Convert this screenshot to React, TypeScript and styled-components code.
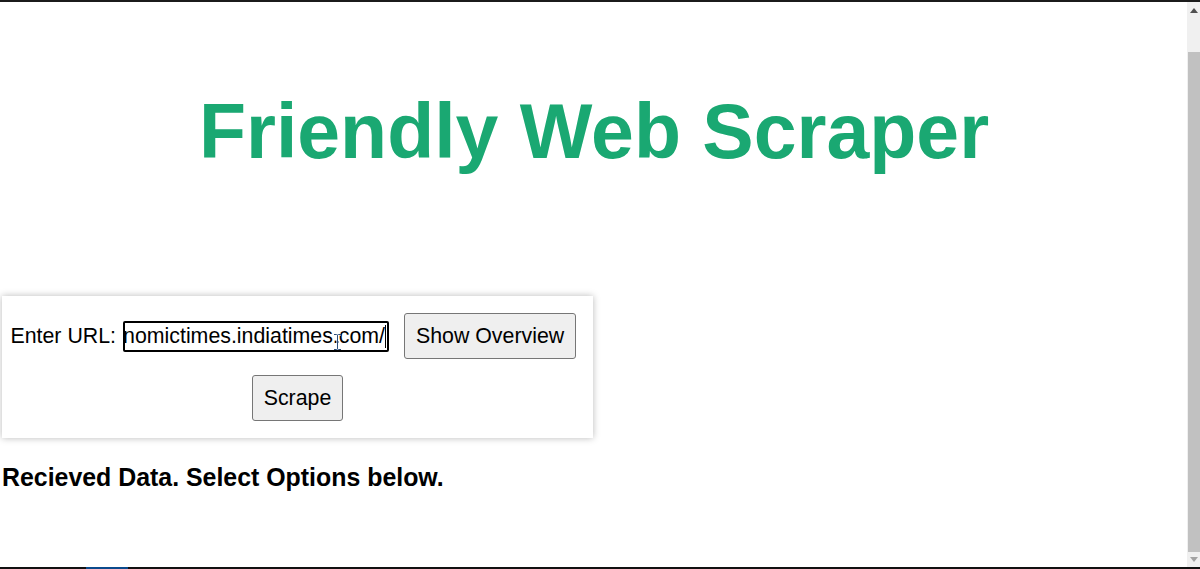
import React from "react";
import styled, { createGlobalStyle } from "styled-components";

const Global = createGlobalStyle`
  html, body { margin: 0; padding: 0; background: #fff; overflow: hidden; }
  body { font-family: "Liberation Sans", Arial, sans-serif; color: #000; }
`;

const Frame = styled.div`
  width: 1200px;
  height: 569px;
  display: flex;
  flex-direction: column;
  background: #fff;
`;

const EdgeLine = styled.div`
  height: 2px;
  flex: none;
  display: flex;
  background: #1b1b1b;
`;

const EdgeSegment = styled.div<{ $w?: number; $color: string }>`
  flex: ${(p) => (p.$w ? `0 0 ${p.$w}px` : "1")};
  background: ${(p) => p.$color};
`;

const Viewport = styled.div`
  flex: 1;
  display: flex;
  min-height: 0;
`;

const Main = styled.main`
  flex: 1;
  min-width: 0;
  display: flex;
  flex-direction: column;
  padding-left: 1px;
`;

const Title = styled.h1`
  margin: 85px 0 0;
  text-align: center;
  font-size: 77px;
  line-height: 88px;
  font-weight: 700;
  color: #1aa872;
`;

const Card = styled.section`
  margin: 121px 0 0 1px;
  width: 591px;
  box-sizing: border-box;
  padding: 17px 0;
  display: flex;
  flex-direction: column;
  gap: 16px;
  background: #fff;
  box-shadow: 0 0 7px rgba(0, 0, 0, 0.28);
`;

const Row = styled.div<{ $center?: boolean }>`
  display: flex;
  align-items: center;
  justify-content: ${(p) => (p.$center ? "center" : "flex-start")};
  padding-left: ${(p) => (p.$center ? "0" : "8.5px")};
`;

const Label = styled.label`
  font-size: 21.33px;
  margin-right: 7px;
`;

const UrlField = styled.div`
  position: relative;
  width: 266px;
  height: 31px;
  box-sizing: border-box;
  border: 2px solid #000;
  border-radius: 2px;
  display: flex;
  align-items: center;
  justify-content: flex-end;
  overflow: hidden;
  white-space: nowrap;
  font-size: 21.33px;
  padding-right: 1px;
  margin-right: 15px;
`;

const Caret = styled.span`
  display: inline-block;
  width: 1px;
  height: 23px;
  background: #000;
  flex: none;
`;

const MouseCursor = styled.svg`
  position: absolute;
  left: 208px;
  top: 10px;
`;

const Button = styled.button`
  font-family: "Liberation Sans", Arial, sans-serif;
  font-size: 21.33px;
  color: #000;
  height: 46px;
  padding: 0 11px;
  background: #efefef;
  border: 1px solid #767676;
  border-radius: 3px;
`;

const Notice = styled.h3`
  margin: 25px 0 0 1px;
  font-size: 24.9px;
  line-height: 29px;
  font-weight: 700;
`;

const Scrollbar = styled.div`
  flex: 0 0 13px;
  display: flex;
  flex-direction: column;
  background: #f0f0f0;
`;

const ScrollButton = styled.div<{ $h: number }>`
  flex: 0 0 ${(p) => p.$h}px;
  display: flex;
  align-items: center;
  justify-content: center;
`;

const Track = styled.div<{ $h: number }>`
  flex: 0 0 ${(p) => p.$h}px;
`;

const Thumb = styled.div`
  flex: 1;
  margin-left: 1px;
  background: #c1c1c1;
`;

const Arrow = ({ up, color }: { up?: boolean; color: string }) => (
  <svg width="8" height="5" viewBox="0 0 8 5">
    <path d={up ? "M0 5 L4 0 L8 5 Z" : "M0 0 L8 0 L4 5 Z"} fill={color} />
  </svg>
);

export default function App() {
  return (
    <>
      <Global />
      <Frame>
        <EdgeLine />
        <Viewport>
          <Main>
            <Title>Friendly Web Scraper</Title>
            <Card>
              <Row>
                <Label>Enter URL:</Label>
                <UrlField>
                  <span>https://economictimes.indiatimes.com/</span>
                  <Caret />
                  <MouseCursor width="9" height="18" viewBox="0 0 9 18">
                    <path
                      d="M1 1.5h2.5c.6 0 1 .4 1 1v13c0 .6.4 1 1 1H8 M8 1.5H5.5c-.6 0-1 .4-1 1v13c0 .6-.4 1-1 1H1 M3 9h3"
                      fill="none"
                      stroke="#fff"
                      strokeWidth="2.2"
                    />
                    <path
                      d="M1 1.5h2.5c.6 0 1 .4 1 1v13c0 .6.4 1 1 1H8 M8 1.5H5.5c-.6 0-1 .4-1 1v13c0 .6-.4 1-1 1H1 M3 9h3"
                      fill="none"
                      stroke="#2a4d7a"
                      strokeWidth="1"
                    />
                  </MouseCursor>
                </UrlField>
                <Button>Show Overview</Button>
              </Row>
              <Row $center>
                <Button>Scrape</Button>
              </Row>
            </Card>
            <Notice>Recieved Data. Select Options below.</Notice>
          </Main>
          <Scrollbar>
            <ScrollButton $h={17}>
              <Arrow up color="#505050" />
            </ScrollButton>
            <Track $h={33} />
            <Thumb />
            <ScrollButton $h={15}>
              <Arrow color="#a3a3a3" />
            </ScrollButton>
          </Scrollbar>
        </Viewport>
        <EdgeLine>
          <EdgeSegment $w={86} $color="#111" />
          <EdgeSegment $w={42} $color="#0b4a8c" />
          <EdgeSegment $color="#111" />
        </EdgeLine>
      </Frame>
    </>
  );
}
